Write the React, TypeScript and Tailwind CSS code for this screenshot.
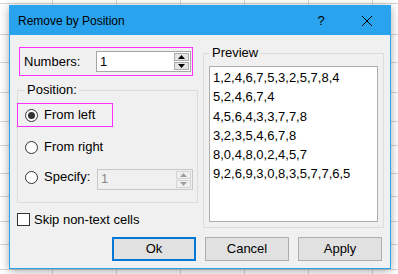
import React from "react";

const H_LINES = [3, 34, 62, 92, 121, 145, 173, 196, 221, 244, 269];
const V_LINES = [52, 116, 180, 244, 308, 372];

function Grid() {
  return (
    <svg className="absolute inset-0" width="398" height="274" shapeRendering="crispEdges">
      {H_LINES.map((y) => (
        <line key={"h" + y} x1="0" x2="398" y1={y + 0.5} y2={y + 0.5} stroke="#d4d4d4" strokeWidth="1" />
      ))}
      {V_LINES.map((x) => (
        <line key={"v" + x} x1={x + 0.5} x2={x + 0.5} y1="0" y2="274" stroke="#d4d4d4" strokeWidth="1" />
      ))}
    </svg>
  );
}

function Arrow({ up, color }: { up: boolean; color: string }) {
  return (
    <svg width="7" height="4" viewBox="0 0 7 4">
      {up ? <polygon points="3.5,0 7,4 0,4" fill={color} /> : <polygon points="0,0 7,0 3.5,4" fill={color} />}
    </svg>
  );
}

function Spinner({ disabled }: { disabled?: boolean }) {
  return (
    <div
      className={
        disabled
          ? "flex items-stretch w-[96px] h-[21px] border border-[#c8c8c8] bg-[#f0f0f0]"
          : "flex items-stretch w-[95px] h-[21px] border border-[#a5a5a5] bg-white"
      }
    >
      <div className={disabled ? "flex-1 flex items-center pl-[3px] text-[#8a8a8a]" : "flex-1 flex items-center pl-[3px] text-black"}>
        1
      </div>
      <div className="flex flex-col justify-center gap-[1px] pr-[1px] py-[1px]">
        <div
          className={
            disabled
              ? "w-[15px] flex-1 flex items-center justify-center border border-[#d4d4d4] bg-[#f0f0f0]"
              : "w-[15px] flex-1 flex items-center justify-center border border-[#acacac] bg-[#e5e5e5]"
          }
        >
          <Arrow up color={disabled ? "#a0a0a0" : "#000"} />
        </div>
        <div
          className={
            disabled
              ? "w-[15px] flex-1 flex items-center justify-center border border-[#d4d4d4] bg-[#f0f0f0]"
              : "w-[15px] flex-1 flex items-center justify-center border border-[#acacac] bg-[#e5e5e5]"
          }
        >
          <Arrow up={false} color={disabled ? "#a0a0a0" : "#000"} />
        </div>
      </div>
    </div>
  );
}

function Radio({ checked }: { checked?: boolean }) {
  return (
    <div className="w-[13px] h-[13px] rounded-full border border-[#333] bg-white flex items-center justify-center shrink-0">
      {checked && <div className="w-[7px] h-[7px] rounded-full bg-[#333]" />}
    </div>
  );
}

const PREVIEW = [
  "1,2,4,6,7,5,3,2,5,7,8,4",
  "5,2,4,6,7,4",
  "4,5,6,4,3,3,7,7,8",
  "3,2,3,5,4,6,7,8",
  "8,0,4,8,0,2,4,5,7",
  "9,2,6,9,3,0,8,3,5,7,7,6,5",
];

export default function App() {
  return (
    <div className="relative w-[398px] h-[274px] overflow-hidden bg-white font-['Liberation_Sans',Arial,sans-serif] text-[13px] text-black">
      <Grid />
      <div className="absolute left-[9px] top-[5px] w-[382px] h-[264px] border border-[#2aa3ef] bg-[#f0f0f0] shadow-[0_2px_9px_rgba(0,0,0,0.35)] flex flex-col">
        {/* Title bar */}
        <div className="h-[29px] bg-[#2aa3ef] flex items-center pl-[8px] shrink-0">
          <span className="text-[12px] leading-none">Remove by Position</span>
          <div className="ml-auto flex h-full">
            <div className="w-[46px] h-full flex items-center justify-center text-[13px]">?</div>
            <div className="w-[46px] h-full flex items-center justify-center">
              <svg width="10" height="10" viewBox="0 0 10 10">
                <line x1="0" y1="0" x2="10" y2="10" stroke="#000" strokeWidth="1" />
                <line x1="10" y1="0" x2="0" y2="10" stroke="#000" strokeWidth="1" />
              </svg>
            </div>
          </div>
        </div>

        {/* Body */}
        <div className="flex flex-col flex-1">
          <div className="flex pl-[7px]">
            {/* Left column */}
            <div className="w-[181px] flex flex-col">
              <div className="mt-[12px] ml-[2px] w-[174px] h-[29px] border border-[#ff2bff] flex items-center pl-[4px]">
                <span className="w-[72px]">Numbers:</span>
                <Spinner />
              </div>

              <fieldset className="mt-[7px] h-[120px] border border-[#dcdcdc]">
                <legend className="ml-[7px] px-[2px] leading-[14px]">Position:</legend>
                <div className="mt-[6px] ml-[-1px] w-[96px] h-[24px] border border-[#ff2bff] flex items-center pl-[7px] gap-[6px]">
                  <Radio checked />
                  <span>From left</span>
                </div>
                <div className="mt-[8px] ml-[-1px] h-[24px] border border-transparent flex items-center pl-[7px] gap-[6px]">
                  <Radio />
                  <span>From right</span>
                </div>
                <div className="mt-[6px] ml-[-1px] h-[24px] border border-transparent flex items-center pl-[7px]">
                  <Radio />
                  <span className="ml-[6px] w-[53px]">Specify:</span>
                  <div className="mt-[4px]">
                    <Spinner disabled />
                  </div>
                </div>
              </fieldset>

              <div className="mt-[10px] h-[13px] flex items-center gap-[4px]">
                <div className="w-[13px] h-[13px] border border-[#333] bg-white shrink-0" />
                <span>Skip non-text cells</span>
              </div>
            </div>

            {/* Right column */}
            <fieldset className="ml-[5px] mt-[11px] w-[181px] h-[182px] border border-[#dcdcdc]">
              <legend className="ml-[6px] px-[2px] leading-[14px]">Preview</legend>
              <div className="mt-[6px] ml-[5px] w-[169px] h-[156px] border border-[#adadad] bg-white pl-[3px] pt-[1px] leading-[19.3px]">
                {PREVIEW.map((l) => (
                  <div key={l}>{l}</div>
                ))}
              </div>
            </fieldset>
          </div>

          {/* Buttons */}
          <div className="mt-[9px] flex justify-end pr-[8px] gap-[9px]">
            <button className="w-[84px] h-[24px] border-2 border-[#0078d7] bg-[#e1e1e1] flex items-center justify-center">
              Ok
            </button>
            <button className="w-[84px] h-[24px] border border-[#adadad] bg-[#e1e1e1] flex items-center justify-center">
              Cancel
            </button>
            <button className="w-[84px] h-[24px] border border-[#adadad] bg-[#e1e1e1] flex items-center justify-center">
              Apply
            </button>
          </div>
        </div>
      </div>
    </div>
  );
}
